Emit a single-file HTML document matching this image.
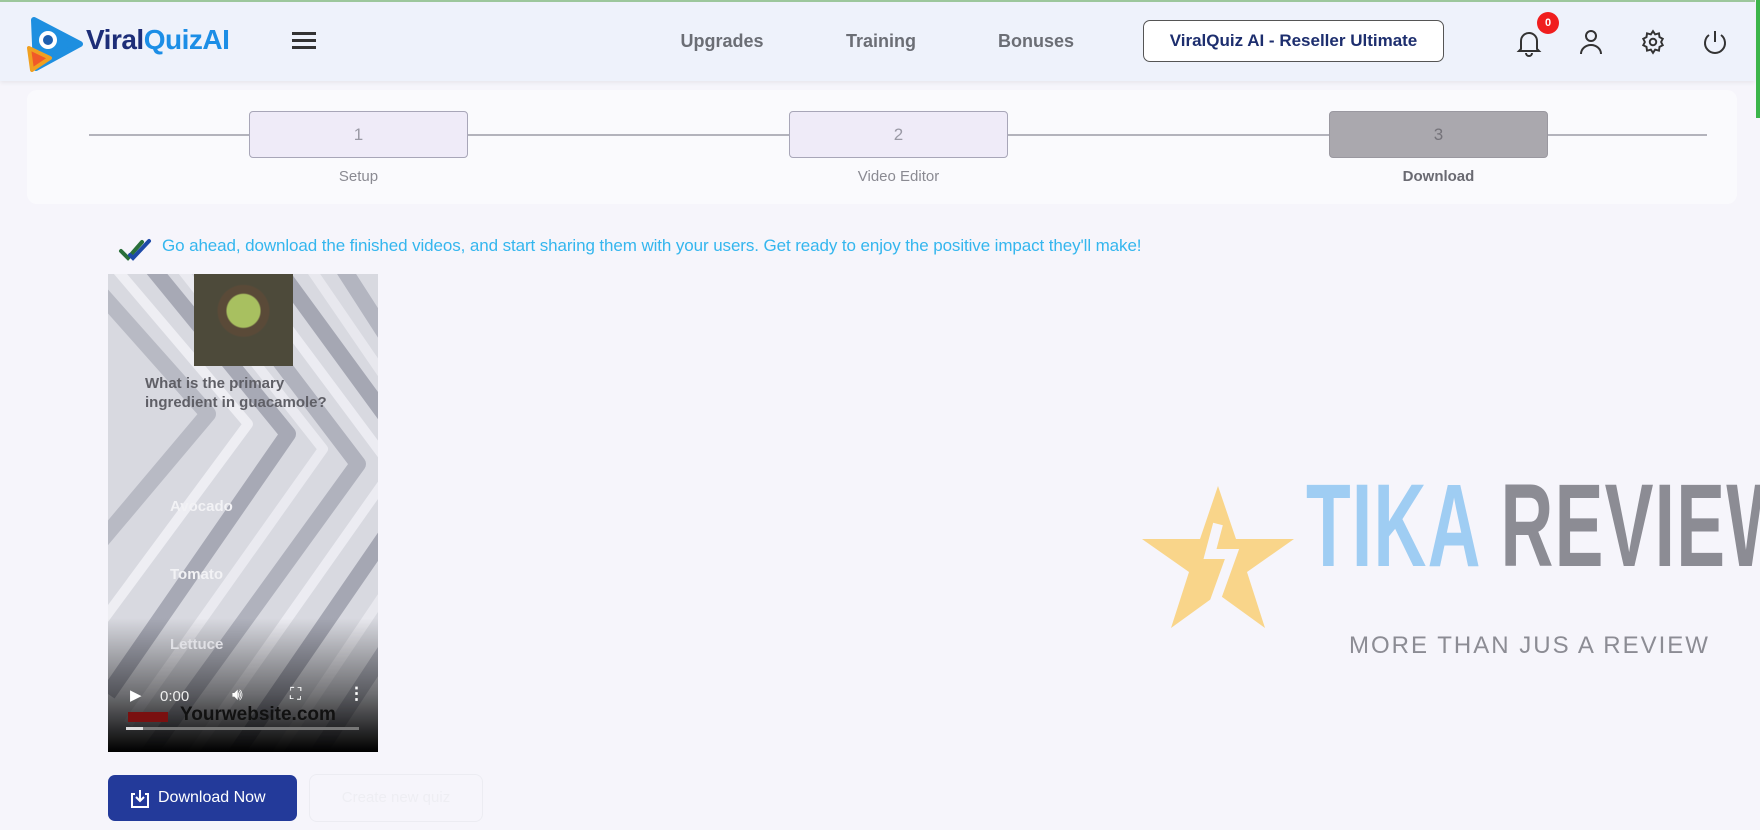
<!DOCTYPE html>
<html><head><meta charset="utf-8"><style>
*{box-sizing:border-box;margin:0;padding:0}
body{width:1760px;height:830px;overflow:hidden;background:#f6f5fb;font-family:"Liberation Sans",sans-serif;position:relative}
.hdr{position:absolute;left:0;top:0;width:1755px;height:81px;background:#eef2fb;border-top:2px solid #9cc79c;box-shadow:0 2px 4px rgba(0,0,0,.06)}
.abs{position:absolute}
.nav{position:absolute;top:29px;font-size:18px;font-weight:bold;color:#6b6e75;transform:translateX(-50%)}
.card{position:absolute;left:27px;top:90px;width:1710px;height:114px;background:#fafafd;border-radius:10px}
.line{position:absolute;left:89px;top:134px;width:1618px;height:2px;background:#b3b3bc}
.box{position:absolute;top:111px;width:219px;height:47px;background:#efebf8;border:1px solid #a8a6b8;border-radius:4px;text-align:center;line-height:45px;color:#9a99a5;font-size:17px}
.lbl{position:absolute;top:168px;width:219px;text-align:center;font-size:15px;color:#8a8a92}
</style></head><body>
<div class="hdr">
  <svg class="abs" style="left:26px;top:12px" width="58" height="58" viewBox="0 0 58 58">
    <path d="M8 6 L54 30 L10 54 Z" fill="#1e8fe0" stroke="#1e8fe0" stroke-width="6" stroke-linejoin="round"/>
    <path d="M3 34 L24 44 L6 56 Z" fill="#f05a28" stroke="#f0a020" stroke-width="4" stroke-linejoin="round"/>
    <circle cx="22" cy="26" r="9" fill="#fff"/><circle cx="22" cy="26" r="5" fill="#1e5fb0"/>
  </svg>
  <div class="abs" style="left:86px;top:22px;font-size:28px;font-weight:bold;color:#1d2e78;letter-spacing:-.5px">Viral<span style="color:#1c8ee6">QuizAI</span></div>
  <div class="abs" style="left:292px;top:30px;width:24px;height:3px;background:#333;box-shadow:0 7px 0 #333,0 14px 0 #333"></div>
  <div class="nav" style="left:722px">Upgrades</div>
  <div class="nav" style="left:881px">Training</div>
  <div class="nav" style="left:1036px">Bonuses</div>
  <div class="abs" style="left:1143px;top:18px;width:301px;height:42px;background:#fff;border:1.5px solid #555;border-radius:7px;text-align:center;line-height:39px;font-size:17px;font-weight:bold;color:#1d2e6e">ViralQuiz AI - Reseller Ultimate</div>
  <svg class="abs" style="left:1516px;top:27px" width="26" height="28" viewBox="0 0 26 28" fill="none" stroke="#333" stroke-width="2"><path d="M5 20 V12 a8 8 0 0 1 16 0 V20 L23 22 H3 Z"/><path d="M10 24 a3 3 0 0 0 6 0"/></svg>
  <div class="abs" style="left:1537px;top:10px;width:22px;height:22px;border-radius:50%;background:#f01e1e;color:#fff;font-size:11px;font-weight:bold;text-align:center;line-height:22px">0</div>
  <svg class="abs" style="left:1578px;top:26px" width="26" height="28" viewBox="0 0 26 28" fill="none" stroke="#333" stroke-width="2"><circle cx="13" cy="8" r="5"/><path d="M3 26 a10 9 0 0 1 20 0"/></svg>
  <svg class="abs" style="left:1640px;top:27px" width="26" height="26" viewBox="0 0 24 24" fill="none" stroke="#333" stroke-width="1.8"><circle cx="12" cy="12" r="3"/><path d="M12 2l2 3 3.5-1 .5 3.5 3 1.5-1.5 3 1.5 3-3 1.5-.5 3.5-3.5-1-2 3-2-3-3.5 1-.5-3.5-3-1.5 1.5-3-1.5-3 3-1.5.5-3.5 3.5 1z"/></svg>
  <svg class="abs" style="left:1701px;top:26px" width="28" height="28" viewBox="0 0 28 28" fill="none" stroke="#333" stroke-width="2"><path d="M14 3 V14"/><path d="M8 7 a10 10 0 1 0 12 0"/></svg>
</div>
<div class="abs" style="left:1756px;top:0;width:4px;height:118px;background:#3bb54a"></div>
<div class="card"></div>
<div class="line"></div>
<div class="box" style="left:249px">1</div>
<div class="box" style="left:789px">2</div>
<div class="box" style="left:1329px;background:#aaa8ae;border-color:#9a98a0;color:#75737a">3</div>
<div class="lbl" style="left:249px">Setup</div>
<div class="lbl" style="left:789px">Video Editor</div>
<div class="lbl" style="left:1329px;font-weight:bold;color:#6a6a72">Download</div>
<svg class="abs" style="left:118px;top:238px" width="34" height="24" viewBox="0 0 34 24" fill="none" stroke-width="4" stroke-linecap="round"><path d="M3 13 L10 20 L24 4" stroke="#2a6f3a"/><path d="M12 17 L15 20 L31 3" stroke="#1e4aa8"/></svg>
<div class="abs" style="left:162px;top:236px;font-size:17px;color:#34b6ee;white-space:nowrap;letter-spacing:-.1px">Go ahead, download the finished videos, and start sharing them with your users. Get ready to enjoy the positive impact they'll make!</div>
<div class="abs" style="left:108px;top:274px;width:270px;height:478px;overflow:hidden;background:#d8d9e0">
  <svg class="abs" style="left:0;top:0" width="270" height="478" viewBox="0 0 270 478" fill="none" stroke-linejoin="round">
    <g stroke-width="16">
      <path d="M-60 -40 L100 140 L-60 330" stroke="#b8bac4"/>
      <path d="M0 -60 L180 160 L0 420" stroke="#a7a9b5"/>
      <path d="M60 -60 L250 190 L40 480" stroke="#b0b2bd"/>
      <path d="M130 -60 L320 200 L100 520" stroke="#a5a7b3"/>
      <path d="M200 -60 L380 220 L170 540" stroke="#b3b5c0"/>
    </g>
    <g stroke-width="10">
      <path d="M-30 -50 L140 150 L-30 380" stroke="#eeeef3"/>
      <path d="M30 -60 L215 175 L20 450" stroke="#eaeaf0"/>
      <path d="M95 -60 L285 195 L70 500" stroke="#ececf2"/>
      <path d="M165 -60 L350 210 L135 530" stroke="#e8e8ee"/>
    </g>
  </svg>
  <div class="abs" style="left:0;top:0;width:270px;height:478px;background:linear-gradient(180deg,rgba(0,0,0,0) 72%,rgba(0,0,0,.5) 88%,#000 100%)"></div>
  <div class="abs" style="left:86px;top:0;width:99px;height:92px;background:radial-gradient(circle at 50% 40%,#a8c060 0 22%,#5a4a38 24% 34%,#4d4a3a 36% 100%)"></div>
  <div class="abs" style="left:37px;top:100px;font-size:15px;font-weight:bold;color:#5f5f66;line-height:19px">What is the primary<br>ingredient in guacamole?</div>
  <div class="abs" style="left:62px;top:224px;font-size:15px;font-weight:bold;color:#f2f2f5">Avocado</div>
  <div class="abs" style="left:62px;top:292px;font-size:15px;font-weight:bold;color:#f2f2f5">Tomato</div>
  <div class="abs" style="left:62px;top:362px;font-size:15px;font-weight:bold;color:#e0e0e5">Lettuce</div>
  <div class="abs" style="left:22px;top:412px;color:#fff;font-size:15px">▶</div>
  <div class="abs" style="left:52px;top:414px;color:#eee;font-size:15px">0:00</div>
  <div class="abs" style="left:124px;top:411px;color:#fff;font-size:17px">🔊︎</div>
  <div class="abs" style="left:182px;top:412px;color:#fff;font-size:16px">⛶</div>
  <div class="abs" style="left:240px;top:410px;color:#fff;font-size:17px;font-weight:bold">⋮</div>
  <div class="abs" style="left:20px;top:438px;width:40px;height:10px;background:#7a1010"></div>
  <div class="abs" style="left:72px;top:430px;font-size:19px;font-weight:bold;color:#111">Yourwebsite.com</div>
  <div class="abs" style="left:18px;top:453px;width:233px;height:3px;background:#777"><div style="width:17px;height:3px;background:#ddd"></div></div>
</div>
<div class="abs" style="left:108px;top:775px;width:189px;height:46px;background:#233a9a;border-radius:7px;color:#fff;font-size:16px;line-height:46px;padding-left:50px">Download Now</div>
<svg class="abs" style="left:128px;top:787px" width="24" height="24" viewBox="0 0 24 24" fill="none" stroke="#fff" stroke-width="2"><path d="M12 3v11M8 10l4 4 4-4"/><path d="M7 7H4v13h16V7h-3"/></svg>
<div class="abs" style="left:309px;top:774px;width:174px;height:48px;border:1px solid #ececf2;border-radius:8px;color:#eeeef3;font-size:15px;text-align:center;line-height:46px">Create new quiz</div>
<svg class="abs" style="left:1140px;top:484px" width="156" height="146" viewBox="0 0 156 146"><path d="M78 2 L96 55 L154 55 L107 88 L125 144 L78 110 L31 144 L49 88 L2 55 L60 55 Z" fill="#f9d58a"/><path d="M78 40 L70 70 L92 70 L74 120" fill="none" stroke="#f6f5fb" stroke-width="10"/></svg>
<div class="abs" style="left:1306px;top:466px;font-size:118px;font-weight:bold;color:#9fcdf3;transform:scaleX(.62);transform-origin:left;letter-spacing:2px;line-height:120px;white-space:nowrap">TIKA <span style="color:#8c8c94">REVIEW</span></div>
<div class="abs" style="left:1349px;top:632px;font-size:24px;color:#8c8c94;letter-spacing:2px;white-space:nowrap">MORE THAN JUS A REVIEW</div>
</body></html>
